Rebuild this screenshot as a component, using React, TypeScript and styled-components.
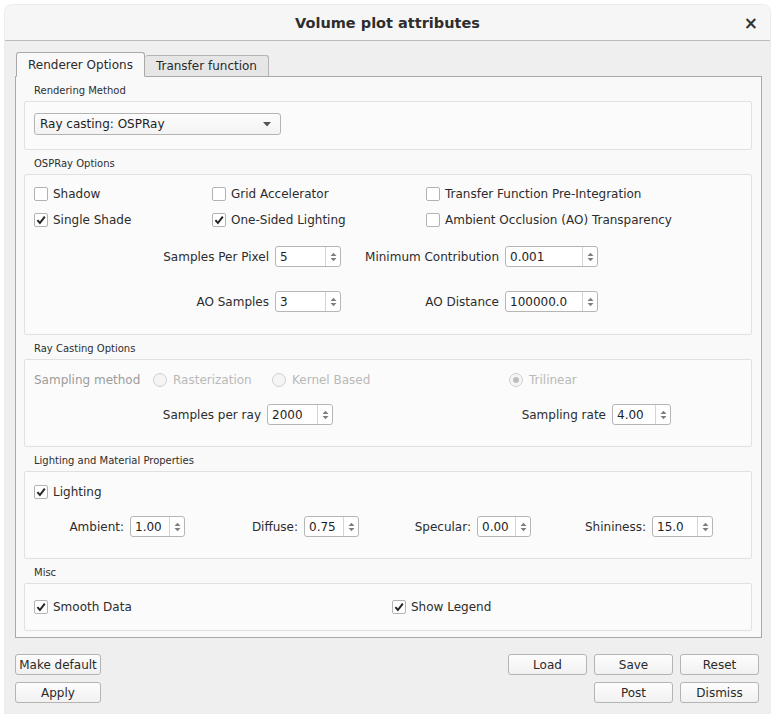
import React from 'react'
import styled, { createGlobalStyle } from 'styled-components'

const GlobalStyle = createGlobalStyle`
    body {
        margin: 0;
        background: #ffffff;
        font-family: 'DejaVu Sans', 'Liberation Sans', sans-serif;
        font-size: 12px;
        color: #2c2c2c;
    }
`

const Window = styled.div`
    margin: 5px;
    width: 765px;
    height: 708px;
    display: flex;
    flex-direction: column;
    background: #efefef;
    border-radius: 7px 7px 0 0;
    overflow: hidden;
    box-shadow: 0 0 0 1px rgba(0, 0, 0, 0.07);
`

const TitleBar = styled.div`
    height: 35px;
    flex: none;
    display: grid;
    grid-template-columns: 1fr auto 1fr;
    align-items: center;
    background: #f6f6f6;
    border-bottom: 1px solid #bcbcbc;
`

const Title = styled.div`
    grid-column: 2;
    font-weight: bold;
    font-size: 14.5px;
    color: #2e2e2e;
`

const Close = styled.div`
    justify-self: end;
    margin-right: 12px;
    font-size: 17px;
    font-weight: bold;
    color: #333;
`

const Body = styled.div`
    flex: 1;
    display: flex;
    flex-direction: column;
    padding: 11px 8px 11px 10px;
`

const TabBar = styled.div`
    display: flex;
    align-items: flex-end;
    height: 24px;
    padding-left: 1px;
`

const Tab = styled.div<{ $active?: boolean }>`
    position: relative;
    z-index: ${({ $active }) => ($active ? 1 : 0)};
    box-sizing: border-box;
    height: ${({ $active }) => ($active ? '25px' : '22px')};
    margin-bottom: -1px;
    padding: 0 11px;
    display: flex;
    align-items: center;
    font-size: 12px;
    color: #2a2a2a;
    background: ${({ $active }) => ($active ? '#f9f9f9' : '#e6e6e6')};
    border: 1px solid ${({ $active }) => ($active ? '#a9a9a9' : '#b4b4b4')};
    border-bottom-color: ${({ $active }) => ($active ? '#f9f9f9' : '#a9a9a9')};
    border-left-width: ${({ $active }) => ($active ? '1px' : '0')};
    border-radius: 3px 3px 0 0;
`

const Pane = styled.div`
    border: 1px solid #a9a9a9;
    background: #f9f9f9;
    padding: 0 9px 6px 8px;
`

const GroupLabel = styled.div`
    margin: 7px 0 4px 10px;
    font-size: 10px;
    line-height: 13px;
    color: #2e2e2e;
`

const GroupBox = styled.div<{ $pad: string }>`
    border: 1px solid #e1e1e1;
    border-radius: 2px;
    background: #fbfbfb;
    padding: ${({ $pad }) => $pad};
`

const Row = styled.div<{ $top?: number; $height?: number }>`
    display: flex;
    align-items: center;
    height: ${({ $height }) => $height ?? 21}px;
    margin-top: ${({ $top }) => $top ?? 0}px;
`

const CheckGrid = styled.div`
    display: grid;
    grid-template-columns: 178px 214px 1fr;
    grid-auto-rows: 20px;
    row-gap: 6px;
    align-items: center;
`

const Cell = styled.div<{ $width: number }>`
    width: ${({ $width }) => $width}px;
    flex: none;
    display: flex;
    align-items: center;
`

const CheckLabel = styled.label`
    display: flex;
    align-items: center;
    gap: 5px;
    white-space: nowrap;
`

const Box = styled.span`
    width: 12px;
    height: 12px;
    flex: none;
    display: flex;
    align-items: center;
    justify-content: center;
    border: 1px solid #b3b3b3;
    border-radius: 2px;
    background: #ffffff;
`

const Field = styled.div<{ $width: number }>`
    width: ${({ $width }) => $width}px;
    flex: none;
    display: flex;
    justify-content: flex-end;
    align-items: center;
    gap: 6px;
    white-space: nowrap;
`

const SpinFrame = styled.div<{ $width: number }>`
    box-sizing: border-box;
    width: ${({ $width }) => $width}px;
    height: 21px;
    display: flex;
    border: 1px solid #b6b6b6;
    border-radius: 3px;
    background: #ffffff;
`

const SpinValue = styled.div`
    flex: 1;
    display: flex;
    align-items: center;
    padding-left: 4px;
    color: #1e1e1e;
`

const SpinArrows = styled.div`
    width: 14px;
    display: flex;
    align-items: center;
    justify-content: center;
    border-left: 1px solid #d4d4d4;
`

const Combo = styled.div`
    box-sizing: border-box;
    width: 247px;
    height: 22px;
    display: flex;
    align-items: center;
    justify-content: space-between;
    padding: 0 9px 0 5px;
    border: 1px solid #b4b4b4;
    border-radius: 3px;
    background: linear-gradient(#fcfcfc, #f3f3f3);
    font-size: 12px;
    color: #1e1e1e;
`

const Muted = styled.span<{ $light?: boolean }>`
    color: ${({ $light }) => ($light ? '#b9b9b9' : '#9c9c9c')};
    white-space: nowrap;
`

const RadioLabel = styled.span`
    display: flex;
    align-items: center;
    gap: 6px;
`

const RadioCircle = styled.span`
    box-sizing: border-box;
    width: 14px;
    height: 14px;
    flex: none;
    display: flex;
    align-items: center;
    justify-content: center;
    border: 1px solid #d0d0d0;
    border-radius: 50%;
    background: #f5f5f5;
`

const RadioDot = styled.span`
    width: 6px;
    height: 6px;
    border-radius: 50%;
    background: #bdbdbd;
`

const ButtonArea = styled.div`
    display: flex;
    flex-direction: column;
    gap: 7px;
    margin-top: 16px;
    padding-right: 3px;
`

const ButtonRow = styled.div`
    display: flex;
    justify-content: space-between;
`

const ButtonGroup = styled.div`
    display: flex;
    gap: 7px;
`

const Button = styled.button<{ $width?: number }>`
    box-sizing: border-box;
    width: ${({ $width }) => $width ?? 79}px;
    height: 21px;
    padding: 0;
    border: 1px solid #b4b4b4;
    border-radius: 3px;
    background: linear-gradient(#fdfdfd, #f1f1f1);
    font-family: 'DejaVu Sans', 'Liberation Sans', sans-serif;
    font-size: 12px;
    color: #2a2a2a;
`

const Check = ({ label, checked }: { label: string; checked?: boolean }) => (
    <CheckLabel>
        <Box>
            {checked && (
                <svg width="10" height="10" viewBox="0 0 10 10">
                    <path d="M1.4 5.2 L3.9 8 L8.8 1.6" fill="none" stroke="#262626" strokeWidth="2" />
                </svg>
            )}
        </Box>
        {label}
    </CheckLabel>
)

const Spin = ({ value, width }: { value: string; width: number }) => (
    <SpinFrame $width={width}>
        <SpinValue>{value}</SpinValue>
        <SpinArrows>
            <svg width="7" height="10" viewBox="0 0 7 10">
                <path d="M0.5 4 L3.5 0.8 L6.5 4 Z" fill="#7d7d7d" />
                <path d="M0.5 6 L3.5 9.2 L6.5 6 Z" fill="#7d7d7d" />
            </svg>
        </SpinArrows>
    </SpinFrame>
)

const LabeledSpin = ({ label, value, width, spinWidth }: { label: string; value: string; width: number; spinWidth: number }) => (
    <Field $width={width}>
        {label}
        <Spin value={value} width={spinWidth} />
    </Field>
)

const Radio = ({ label, checked }: { label: string; checked?: boolean }) => (
    <RadioLabel>
        <RadioCircle>{checked && <RadioDot />}</RadioCircle>
        <Muted $light>{label}</Muted>
    </RadioLabel>
)

const App: React.FC = () => {
    return (
        <>
            <GlobalStyle />
            <Window>
                <TitleBar>
                    <Title>Volume plot attributes</Title>
                    <Close>×</Close>
                </TitleBar>
                <Body>
                    <TabBar>
                        <Tab $active>Renderer Options</Tab>
                        <Tab>Transfer function</Tab>
                    </TabBar>
                    <Pane>
                        <GroupLabel>Rendering Method</GroupLabel>
                        <GroupBox $pad="11px 9px 14px">
                            <Combo>
                                Ray casting: OSPRay
                                <svg width="8" height="5" viewBox="0 0 8 5">
                                    <path d="M0 0 L8 0 L4 4.5 Z" fill="#555" />
                                </svg>
                            </Combo>
                        </GroupBox>

                        <GroupLabel>OSPRay Options</GroupLabel>
                        <GroupBox $pad="9px 9px 22px">
                            <CheckGrid>
                                <Check label="Shadow" />
                                <Check label="Grid Accelerator" />
                                <Check label="Transfer Function Pre-Integration" />
                                <Check label="Single Shade" checked />
                                <Check label="One-Sided Lighting" checked />
                                <Check label="Ambient Occlusion (AO) Transparency" />
                            </CheckGrid>
                            <Row $top={16}>
                                <LabeledSpin label="Samples Per Pixel" value="5" width={307} spinWidth={66} />
                                <LabeledSpin label="Minimum Contribution" value="0.001" width={257} spinWidth={93} />
                            </Row>
                            <Row $top={24}>
                                <LabeledSpin label="AO Samples" value="3" width={307} spinWidth={66} />
                                <LabeledSpin label="AO Distance" value="100000.0" width={257} spinWidth={93} />
                            </Row>
                        </GroupBox>

                        <GroupLabel>Ray Casting Options</GroupLabel>
                        <GroupBox $pad="10px 9px 21px">
                            <Row $height={20}>
                                <Cell $width={119}>
                                    <Muted>Sampling method</Muted>
                                </Cell>
                                <Cell $width={119}>
                                    <Radio label="Rasterization" />
                                </Cell>
                                <Cell $width={237}>
                                    <Radio label="Kernel Based" />
                                </Cell>
                                <Cell $width={120}>
                                    <Radio label="Trilinear" checked />
                                </Cell>
                            </Row>
                            <Row $top={14}>
                                <LabeledSpin label="Samples per ray" value="2000" width={299} spinWidth={66} />
                                <LabeledSpin label="Sampling rate" value="4.00" width={338} spinWidth={59} />
                            </Row>
                        </GroupBox>

                        <GroupLabel>Lighting and Material Properties</GroupLabel>
                        <GroupBox $pad="10px 9px 21px">
                            <Row $height={20}>
                                <Check label="Lighting" checked />
                            </Row>
                            <Row $top={14}>
                                <LabeledSpin label="Ambient:" value="1.00" width={151} spinWidth={55} />
                                <LabeledSpin label="Diffuse:" value="0.75" width={174} spinWidth={55} />
                                <LabeledSpin label="Specular:" value="0.00" width={172} spinWidth={54} />
                                <LabeledSpin label="Shininess:" value="15.0" width={182} spinWidth={61} />
                            </Row>
                        </GroupBox>

                        <GroupLabel>Misc</GroupLabel>
                        <GroupBox $pad="13px 9px 13px">
                            <Row $height={20}>
                                <Cell $width={358}>
                                    <Check label="Smooth Data" checked />
                                </Cell>
                                <Check label="Show Legend" checked />
                            </Row>
                        </GroupBox>
                    </Pane>

                    <ButtonArea>
                        <ButtonRow>
                            <Button $width={86}>Make default</Button>
                            <ButtonGroup>
                                <Button>Load</Button>
                                <Button>Save</Button>
                                <Button>Reset</Button>
                            </ButtonGroup>
                        </ButtonRow>
                        <ButtonRow>
                            <Button $width={86}>Apply</Button>
                            <ButtonGroup>
                                <Button>Post</Button>
                                <Button>Dismiss</Button>
                            </ButtonGroup>
                        </ButtonRow>
                    </ButtonArea>
                </Body>
            </Window>
        </>
    )
}

export default App
